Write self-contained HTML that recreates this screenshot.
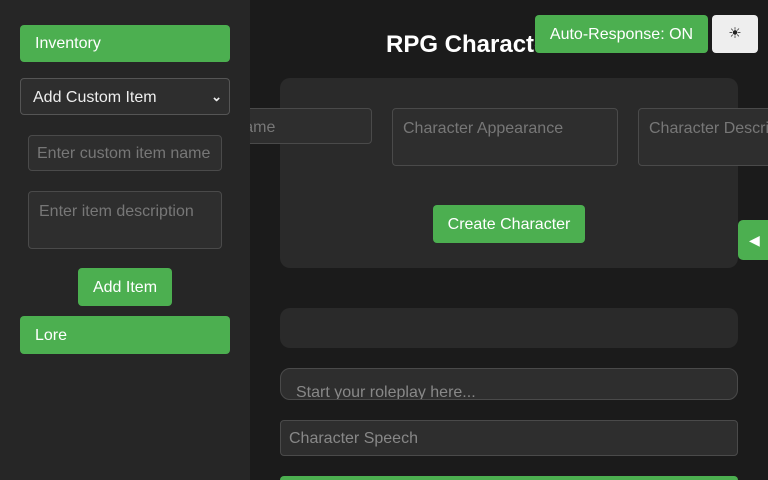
<!DOCTYPE html>
<html><head><style>
*{box-sizing:border-box;margin:0;padding:0}
html,body{width:768px;height:480px;overflow:hidden}
body{background:#1b1b1b;font-family:"Liberation Sans",sans-serif;position:relative;color:#fff}
.a{position:absolute}
.g{background:#4caf50;color:#fff;border-radius:4px;font-size:16px}
.in{background:#2e2e2e;border:1px solid #4a4a4a;border-radius:4px;color:#777;font-size:16px;overflow:hidden;white-space:nowrap}
</style></head><body>
<div class="a" style="left:280px;top:78px;width:458px;height:190px;background:#2a2a2a;border-radius:10px"></div>
<div class="a in" style="left:142px;top:108px;width:230px;height:36px;padding:10px 10px 0 15px">Character Name</div>
<div class="a in" style="left:392px;top:108px;width:226px;height:58px;padding:11px 10px">Character Appearance</div>
<div class="a in" style="left:638px;top:108px;width:200px;height:58px;padding:11px 10px">Character Description</div>
<div class="a g" style="left:433px;top:205px;width:152px;height:38px;line-height:39px;text-align:center">Create Character</div>
<div class="a" style="left:738px;top:220px;width:40px;height:40px;background:#4caf50;border-radius:5px;color:#fff;font-size:14px;line-height:40px;padding-left:11px">◀</div>
<div class="a" style="left:280px;top:308px;width:458px;height:40px;background:#2a2a2a;border-radius:10px"></div>
<div class="a in" style="left:280px;top:368px;width:458px;height:32px;border-radius:10px;padding:15px 15px;color:#888">Start your roleplay here...</div>
<div class="a in" style="left:280px;top:420px;width:458px;height:36px;padding:9px 8px;color:#888">Character Speech</div>
<div class="a" style="left:280px;top:476px;width:458px;height:4px;background:#4caf50;border-radius:5px 5px 0 0"></div>
<div class="a" style="left:386px;top:31px;font-size:24px;font-weight:bold;white-space:nowrap">RPG Character Creator</div>
<div class="a g" style="left:535px;top:15px;width:173px;height:38px;line-height:39px;text-align:center">Auto-Response: ON</div>
<div class="a" style="left:712px;top:15px;width:46px;height:38px;background:#eee;border-radius:4px;color:#222;text-align:center;line-height:38px;font-size:15px">☀</div>
<div class="a" style="left:0;top:0;width:250px;height:480px;background:#262626"></div>
<div class="a g" style="left:20px;top:25px;width:210px;height:37px;line-height:38px;padding-left:15px">Inventory</div>
<div class="a in" style="left:20px;top:78px;width:210px;height:37px;line-height:37px;padding-left:12px;color:#eee;border-color:#555">Add Custom Item<span style="position:absolute;right:7px;top:-1px;font-size:13px;font-weight:bold">&#8964;</span></div>
<div class="a in" style="left:28px;top:135px;width:194px;height:36px;line-height:35px;padding-left:8px">Enter custom item name</div>
<div class="a in" style="left:28px;top:191px;width:194px;height:58px;padding:11px 10px">Enter item description</div>
<div class="a g" style="left:78px;top:268px;width:94px;height:38px;line-height:39px;text-align:center">Add Item</div>
<div class="a g" style="left:20px;top:316px;width:210px;height:38px;line-height:39px;padding-left:15px">Lore</div>
</body></html>
